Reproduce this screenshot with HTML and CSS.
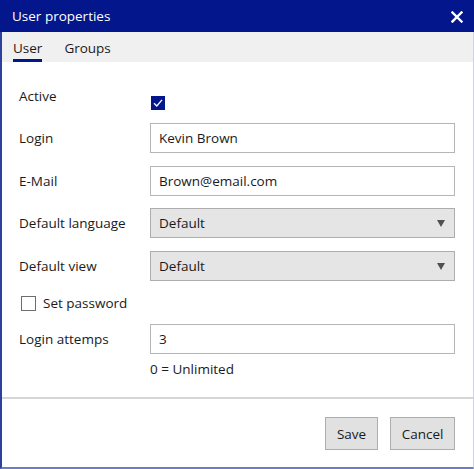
FILE: index.html
```html
<!DOCTYPE html>
<html>
<head>
<meta charset="utf-8">
<link rel="stylesheet" href="styles.css">
</head>
<body>
<div class="dialog">
  <div class="titlebar">
    <span class="title">User properties</span>
    <svg class="close" width="12" height="12" viewBox="0 0 12 12"><path d="M1.5 1.5 L10.5 10.5 M10.5 1.5 L1.5 10.5" stroke="#fff" stroke-width="2.4" stroke-linecap="square"/></svg>
  </div>
  <div class="frame">
    <div class="tabs">
      <span class="tab active">User</span>
      <span class="tab">Groups</span>
    </div>
    <div class="form">
      <div class="row row-active">
        <span class="label">Active</span>
        <span class="check checked"><svg width="14" height="14" viewBox="0 0 14 14"><path d="M3 7.2 L5.8 10 L11 3.8" fill="none" stroke="#fff" stroke-width="1.3"/></svg></span>
      </div>
      <div class="row">
        <span class="label">Login</span>
        <div class="input">Kevin Brown</div>
      </div>
      <div class="row">
        <span class="label">E-Mail</span>
        <div class="input">Brown@email.com</div>
      </div>
      <div class="row row-sel1">
        <span class="label">Default language</span>
        <div class="select"><span>Default</span><span class="arrow"></span></div>
      </div>
      <div class="row">
        <span class="label">Default view</span>
        <div class="select"><span>Default</span><span class="arrow"></span></div>
      </div>
      <div class="row row-pwd">
        <span class="check empty"></span>
        <span class="pwd-label">Set password</span>
      </div>
      <div class="row row-att">
        <span class="label">Login attemps</span>
        <div class="input">3</div>
      </div>
      <div class="hint">0 = Unlimited</div>
    </div>
    <div class="footer">
      <button class="btn btn-save">Save</button>
      <button class="btn btn-cancel">Cancel</button>
    </div>
  </div>
</div>
</body>
</html>
```

FILE: styles.css
```css
* { box-sizing: border-box; }
html, body { margin: 0; padding: 0; background: #fff; }
body {
  font-family: "Open Sans", "Noto Sans", sans-serif;
  font-size: 13.5px;
  color: #1a1a1a;
  width: 474px;
  height: 469px;
  overflow: hidden;
}
.dialog {
  width: 474px;
  height: 469px;
  display: flex;
  flex-direction: column;
}
.titlebar {
  height: 32px;
  background: #03168c;
  color: #fff;
  display: flex;
  align-items: center;
  justify-content: space-between;
  padding: 0 11px 0 12px;
  flex: none;
}
.title { font-size: 13.5px; line-height: 20px; }
.close { display: block; margin-top: 2px; }
.frame {
  flex: 1;
  border-left: 2px solid #2f3fa0;
  border-right: 1px solid #cdd2e8;
  border-bottom: 2px solid #6f7bc0;
  display: flex;
  flex-direction: column;
}
.tabs {
  height: 30px;
  background: #f0f0f0;
  display: flex;
  padding-left: 11px;
  gap: 22px;
  flex: none;
}
.tab {
  font-size: 13.5px;
  line-height: 30px;
  height: 30px;
  position: relative;
  padding-top: 1px;
}
.tab.active::after {
  content: "";
  position: absolute;
  left: 0;
  right: 0;
  bottom: 0;
  height: 3px;
  background: #03168c;
}
.form {
  padding: 24px 0 0 17px;
  display: flex;
  flex-direction: column;
}
.row {
  display: flex;
  align-items: center;
  height: 30px;
  margin-top: 13px;
}
.row-active { height: 24px; margin-top: 0; align-items: flex-start; }
.row-sel1 { margin-top: 12px; }
.row-pwd { height: 20px; margin-top: 12px; }
.row-att { margin-top: 11px; }
.label {
  width: 131px;
  flex: none;
  line-height: 20px;
  margin-top: -1px;
}
.row-active .label { margin-top: 0; }
.check {
  width: 14px;
  height: 14px;
  flex: none;
  display: block;
}
.check svg { display: block; }
.check.checked {
  background: #03168c;
  margin-top: 10px;
  margin-left: 1px;
}
.check.empty {
  width: 15px;
  height: 15px;
  border: 1px solid #6d6d6d;
  background: #fff;
  margin-left: 2px;
}
.pwd-label { margin-left: 7px; line-height: 20px; }
.input, .select {
  width: 305px;
  height: 30px;
  border: 1px solid #b5b5b5;
  background: #fff;
  padding: 0 8px;
  line-height: 28px;
  font-size: 13.5px;
}
.select {
  background: #e5e5e5;
  border-color: #adadad;
  display: flex;
  justify-content: space-between;
  align-items: center;
}
.arrow {
  width: 0;
  height: 0;
  border-left: 4.5px solid transparent;
  border-right: 4.5px solid transparent;
  border-top: 7px solid #505050;
  margin-right: 1px;
}
.hint {
  margin-left: 131px;
  line-height: 20px;
  margin-top: 5px;
  font-size: 13.5px;
}
.footer {
  margin-top: auto;
  border-top: 2px solid #d6d6d6;
  height: 70px;
  display: flex;
  justify-content: flex-end;
  align-items: flex-start;
  gap: 12px;
  padding: 18px 18px 0 0;
}
.btn {
  font-family: inherit;
  font-size: 13.5px;
  color: #1a1a1a;
  height: 33px;
  background: #e1e1e1;
  border: 1px solid #adadad;
  padding: 0;
  margin: 0;
}
.btn-save { width: 53px; }
.btn-cancel { width: 65px; }
```
